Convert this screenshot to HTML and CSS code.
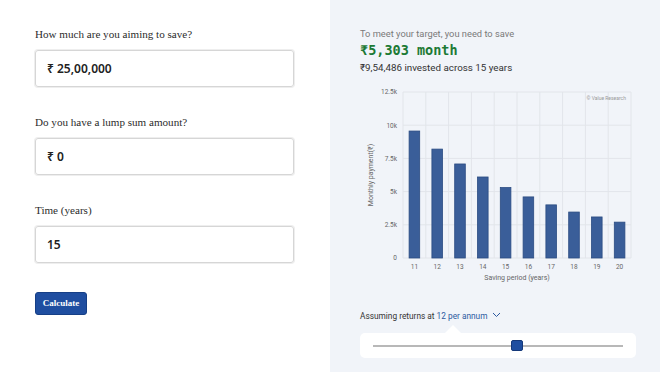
FILE: index.html
```html
<!DOCTYPE html>
<html lang="en">
<head>
    <meta charset="UTF-8">
    <meta name="viewport" content="width=device-width, initial-scale=1.0">
    <title>SIP Goal Calculator</title>
    <link rel="stylesheet" href="styles.css">
</head>
<body>
    <div class="page">
        <div class="inputs">
            <div class="field">
                <label>How much are you aiming to save?</label>
                <div class="box">₹ 25,00,000</div>
            </div>
            <div class="field">
                <label>Do you have a lump sum amount?</label>
                <div class="box">₹ 0</div>
            </div>
            <div class="field">
                <label>Time (years)</label>
                <div class="box">15</div>
            </div>
            <button class="calc">Calculate</button>
        </div>

        <div class="result">
            <p class="intro">To meet your target, you need to save</p>
            <p class="amount">₹5,303 month</p>
            <p class="invested">₹9,54,486 invested across 15 years</p>

            <svg class="chart" width="280" height="204" viewBox="0 0 280 204">
                <g class="grid">
                    <line x1="43" y1="8" x2="271" y2="8"/>
                    <line x1="43" y1="41.2" x2="271" y2="41.2"/>
                    <line x1="43" y1="74.4" x2="271" y2="74.4"/>
                    <line x1="43" y1="107.6" x2="271" y2="107.6"/>
                    <line x1="43" y1="140.8" x2="271" y2="140.8"/>
                    <line x1="43" y1="174" x2="271" y2="174"/>
                    <line x1="43" y1="8" x2="43" y2="174"/>
                    <line x1="65.8" y1="8" x2="65.8" y2="174"/>
                    <line x1="88.6" y1="8" x2="88.6" y2="174"/>
                    <line x1="111.4" y1="8" x2="111.4" y2="174"/>
                    <line x1="134.2" y1="8" x2="134.2" y2="174"/>
                    <line x1="157" y1="8" x2="157" y2="174"/>
                    <line x1="179.8" y1="8" x2="179.8" y2="174"/>
                    <line x1="202.6" y1="8" x2="202.6" y2="174"/>
                    <line x1="225.4" y1="8" x2="225.4" y2="174"/>
                    <line x1="248.2" y1="8" x2="248.2" y2="174"/>
                    <line x1="271" y1="8" x2="271" y2="174"/>
                </g>
                <g class="ylabels">
                    <text x="37" y="10">12.5k</text>
                    <text x="37" y="43.5">10k</text>
                    <text x="37" y="76.5">7.5k</text>
                    <text x="37" y="110">5k</text>
                    <text x="37" y="143">2.5k</text>
                    <text x="37" y="176">0</text>
                </g>
                <g class="bars" id="bars"></g>
                <g class="xlabels" id="xlabels"></g>
                <text class="axis-title" x="157" y="196">Saving period (years)</text>
                <text class="axis-title" transform="translate(13 91) rotate(-90)">Monthly payment(₹)</text>
                <text class="credit" x="266" y="16">© Value Research</text>
            </svg>

            <p class="returns">Assuming returns at <span class="rate">12 per annum</span>
                <svg class="chev" width="9" height="6" viewBox="0 0 9 6"><path d="M1 1 L4.5 4.5 L8 1" fill="none" stroke="#2c5aa0" stroke-width="1"/></svg>
            </p>
            <div class="slider-card">
                <div class="track">
                    <div class="thumb" style="left: 55%"></div>
                </div>
            </div>
        </div>
    </div>

    <script>
        // monthly payment needed for each saving period
        const payments = [9560, 8200, 7080, 6100, 5303, 4600, 4000, 3460, 3090, 2700];
        const bars = document.getElementById('bars');
        const labels = document.getElementById('xlabels');
        const ns = 'http://www.w3.org/2000/svg';
        payments.forEach((v, i) => {
            const cx = 43 + 22.8 * i + 11.4;
            const h = v / 12500 * 166;
            const r = document.createElementNS(ns, 'rect');
            r.setAttribute('x', cx - 5.3);
            r.setAttribute('y', 174 - h);
            r.setAttribute('width', 10.6);
            r.setAttribute('height', h);
            bars.appendChild(r);
            const t = document.createElementNS(ns, 'text');
            t.setAttribute('x', cx);
            t.setAttribute('y', 184.5);
            t.textContent = 11 + i;
            labels.appendChild(t);
        });
    </script>
</body>
</html>
```

FILE: styles.css
```css
body {
    margin: 0;
    font-family: Roboto, "Noto Sans", sans-serif;
}
p {
    margin: 0;
}
.page {
    display: flex;
    width: 660px;
    height: 372px;
    overflow: hidden;
}
.inputs {
    width: 330px;
    background: white;
    padding: 27px 0 0 35px;
    box-sizing: border-box;
}
.field {
    margin-bottom: 28px;
}
.field label {
    display: block;
    font-family: "Liberation Serif", "DejaVu Serif", serif;
    font-size: 11.1px;
    line-height: 14px;
    color: #2b2b2b;
    margin-bottom: 9px;
}
.box {
    width: 259px;
    height: 37px;
    box-sizing: border-box;
    border: 1px solid #d6d6d6;
    box-shadow: 0 0 0 1px #eeeeee;
    border-radius: 3px;
    padding-left: 11px;
    display: flex;
    align-items: center;
    font-family: "Noto Sans", sans-serif;
    font-size: 12px;
    font-weight: 600;
    color: #222;
}
.calc {
    width: 52px;
    height: 23px;
    background: #1f4ea0;
    border: 1px solid #163f86;
    border-radius: 3px;
    color: white;
    font-family: "Liberation Serif", "DejaVu Serif", serif;
    font-size: 9px;
    font-weight: bold;
    padding: 0;
    cursor: pointer;
}
.result {
    flex: 1;
    background: #f1f4f9;
    padding: 27px 0 0 30px;
}
.intro {
    font-size: 9.3px;
    line-height: 13px;
    color: #7a7a7a;
}
.amount {
    margin-top: 1px;
    font-family: "DejaVu Sans Mono", "Liberation Mono", monospace;
    font-weight: bold;
    font-size: 13.5px;
    line-height: 18px;
    color: #1d7a35;
}
.invested {
    margin-top: 2px;
    font-size: 9.8px;
    line-height: 14px;
    color: #333;
}
.chart {
    display: block;
    margin-top: 9px;
}
.grid line {
    stroke: #e2e5ea;
    stroke-width: 1;
}
.ylabels text {
    font-size: 6.5px;
    fill: #666;
    text-anchor: end;
}
.xlabels text {
    font-size: 6.5px;
    fill: #666;
    text-anchor: middle;
}
.bars rect {
    fill: #3a5e99;
    stroke: #2b4c82;
    stroke-width: 0.8;
}
.axis-title {
    font-size: 7px;
    fill: #666;
    text-anchor: middle;
}
.credit {
    font-size: 5px;
    fill: #999;
    text-anchor: end;
}
.returns {
    margin-top: 22px;
    font-size: 8.3px;
    line-height: 12px;
    color: #333;
}
.rate {
    color: #2c5aa0;
}
.chev {
    margin-left: 2px;
    vertical-align: 1px;
}
.slider-card {
    position: relative;
    margin-top: 11px;
    width: 276px;
    height: 25px;
    background: white;
    border-radius: 5px;
    padding: 0 13px;
    box-sizing: border-box;
    display: flex;
    align-items: center;
}
.slider-card::before {
    content: "";
    position: absolute;
    left: 85px;
    top: -8px;
    border-left: 8px solid transparent;
    border-right: 8px solid transparent;
    border-bottom: 8px solid white;
}
.track {
    position: relative;
    flex: 1;
    height: 2px;
    background: #b8b8b8;
}
.thumb {
    position: absolute;
    top: -5px;
    width: 12px;
    height: 11px;
    box-sizing: border-box;
    background: #1f4ea0;
    border: 1px solid #15397a;
    border-radius: 2px;
}
```
